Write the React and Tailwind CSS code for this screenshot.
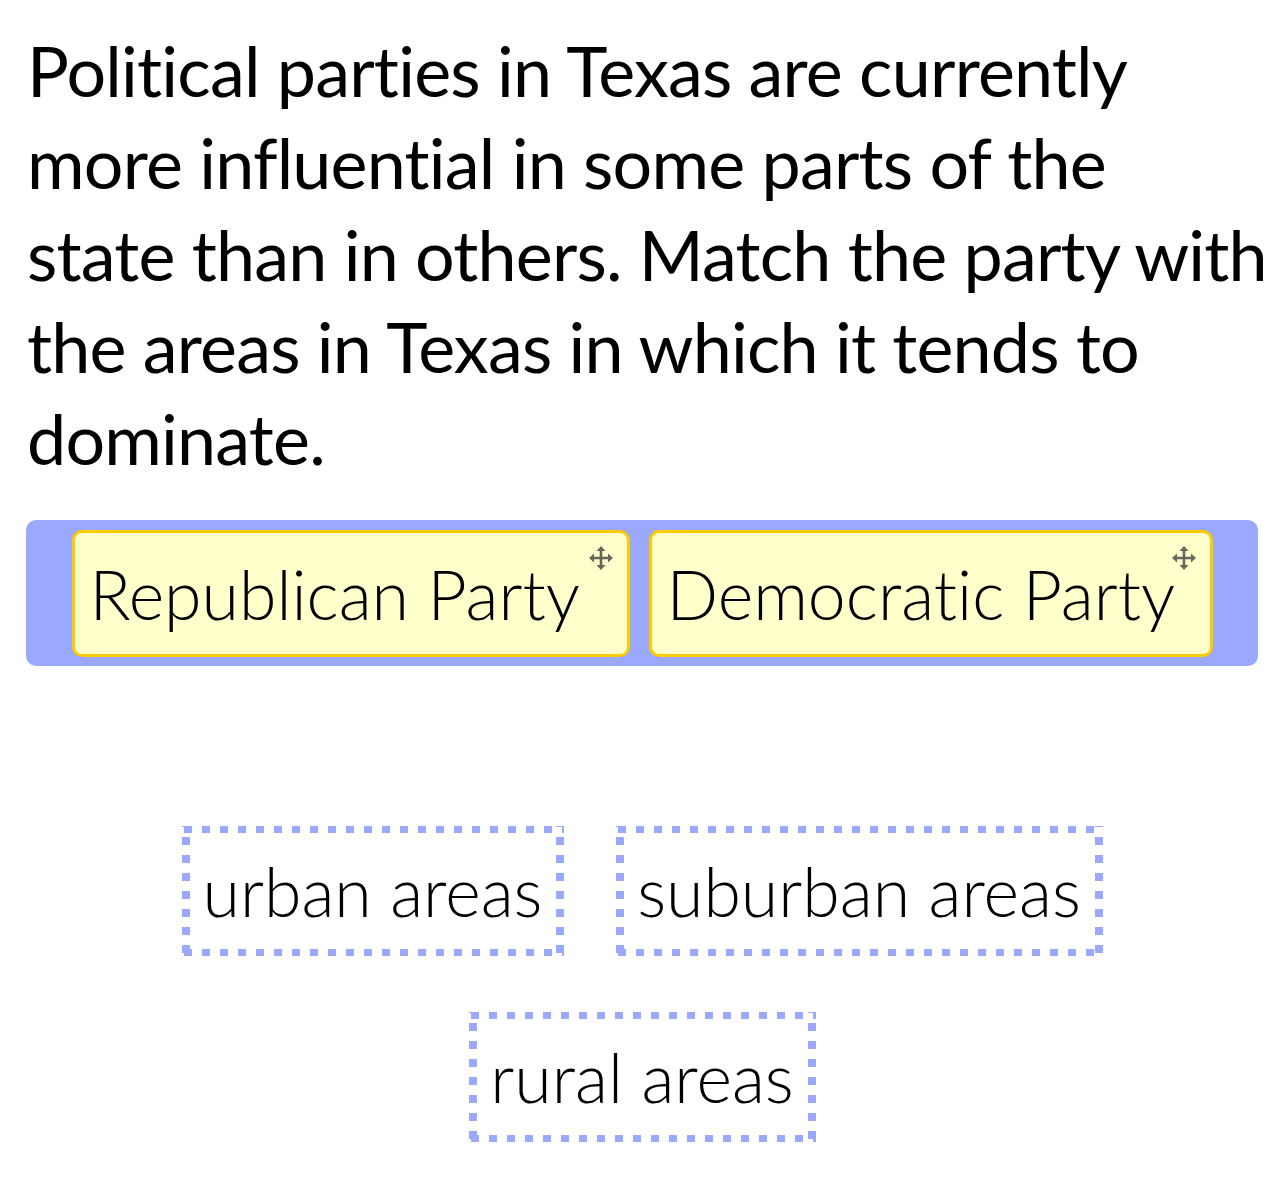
import React from 'react';

const MoveIcon = () => (
  <svg width="26" height="26" viewBox="0 0 26 26" className="text-[#66665a]">
    <path d="M13 4v18M4 13h18" stroke="currentColor" strokeWidth="2.6" />
    <path d="M13 1l4.5 5h-9zM13 25l4.5-5h-9zM1 13l5-4.5v9zM25 13l-5-4.5v9z" fill="currentColor" />
  </svg>
);

const Chip = ({ label, width }) => (
  <div className={`relative flex h-[127px] items-center rounded-[10px] border-[3px] border-[#fccb00] bg-[#ffffcc] pl-[15px] ${width}`}>
    <span className="font-light text-[68px]">{label}</span>
    <span className="absolute right-[13px] top-[12px]">
      <MoveIcon />
    </span>
  </div>
);

// square-dot border drawn with gradients, chrome's dashed looks different
const dots =
  '[background-image:linear-gradient(90deg,#9aa8fd_0_8px,transparent_8px_18px),linear-gradient(90deg,#9aa8fd_0_8px,transparent_8px_18px),linear-gradient(180deg,#9aa8fd_0_8px,transparent_8px_18px),linear-gradient(180deg,#9aa8fd_0_8px,transparent_8px_18px)] [background-repeat:repeat-x,repeat-x,repeat-y,repeat-y] [background-size:18px_7px,18px_7px,8px_18px,8px_18px] [background-position:2px_0,2px_100%,0_11px,100%_11px]';

const Target = ({ label, width }) => (
  <div className={`flex h-[130px] items-center justify-center ${dots} ${width}`}>
    <span className="font-light text-[68px]">{label}</span>
  </div>
);

export default function App() {
  const lines = [
    'Political parties in Texas are currently',
    'more influential in some parts of the',
    'state than in others. Match the party with',
    'the areas in Texas in which it tends to',
    'dominate.',
  ];

  return (
    <div className="min-h-screen bg-white px-[26px] pt-[24px] text-black text-[70px] leading-[92px] [font-variant-ligatures:none] [font-family:Lato,'Liberation_Sans',sans-serif]">
      <div className="pl-[1px] tracking-[-0.8px]">
        {lines.map((l) => (
          <div key={l} className="whitespace-nowrap">{l}</div>
        ))}
      </div>

      <div className="mt-[36px] flex justify-center gap-[19px] rounded-[10px] bg-[#9aa8fd] pt-[10px] pb-[9px]">
        <Chip label="Republican Party" width="w-[558px]" />
        <Chip label="Democratic Party" width="w-[564px]" />
      </div>

      <div className="mt-[160px] flex flex-wrap justify-center gap-x-[52px] gap-y-[56px] px-[100px]">
        <Target label="urban areas" width="w-[382px]" />
        <Target label="suburban areas" width="w-[487px]" />
        <Target label="rural areas" width="w-[347px]" />
      </div>
    </div>
  );
}
